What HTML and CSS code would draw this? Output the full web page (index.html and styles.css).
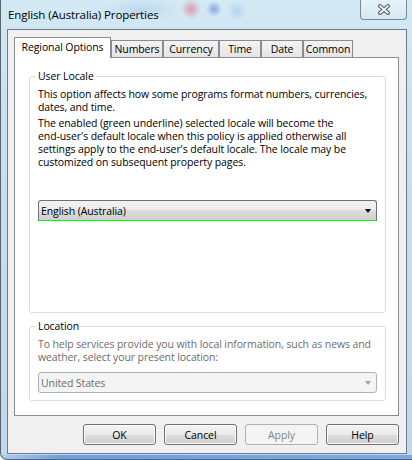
FILE: index.html
```html
<!DOCTYPE html>
<html lang="en">

<head>
  <title>English (Australia) Properties</title>
  <link rel="stylesheet" href="styles.css">
</head>

<body>
  <div class="window">
    <div class="titlebar">
      <span class="title">English (Australia) Properties</span>
      <button class="close-btn" aria-label="Close">
        <svg width="14" height="11" viewBox="0 0 14 11">
          <path d="M3 2 L11 9 M11 2 L3 9" stroke="#4b5661" stroke-width="3.8" stroke-linecap="round" />
          <path d="M3 2 L11 9 M11 2 L3 9" stroke="#ffffff" stroke-width="1.7" stroke-linecap="round" />
        </svg>
      </button>
    </div>

    <div class="client">
      <div class="tabs">
        <div class="tab selected tab-regional">Regional Options</div>
        <div class="tab tab-numbers">Numbers</div>
        <div class="tab tab-currency">Currency</div>
        <div class="tab tab-time">Time</div>
        <div class="tab tab-date">Date</div>
        <div class="tab tab-common">Common</div>
      </div>

      <div class="tab-panel">
        <fieldset class="group locale-group">
          <legend>User Locale</legend>
          <p>This option affects how some programs format numbers, currencies, dates, and time.</p>
          <p>The enabled (green underline) selected locale will become the <span class="nowrap">end-user's</span> default locale when this policy is applied otherwise all settings apply to the <span class="nowrap">end-user's</span> default locale. The locale may be customized on subsequent property pages.</p>
          <div class="combo locale-combo">
            <span>English (Australia)</span>
            <span class="arrow"></span>
          </div>
        </fieldset>

        <fieldset class="group location-group">
          <legend>Location</legend>
          <p>To help services provide you with local information, such as news and weather, select your present location:</p>
          <div class="combo location-combo">
            <span>United States</span>
            <span class="arrow"></span>
          </div>
        </fieldset>
      </div>

      <div class="buttons">
        <button class="btn">OK</button>
        <button class="btn">Cancel</button>
        <button class="btn" disabled>Apply</button>
        <button class="btn">Help</button>
      </div>
    </div>
  </div>
</body>

</html>
```

FILE: styles.css
```css
* {
  box-sizing: border-box;
}

body {
  margin: 0;
  font-family: 'Open Sans', 'Liberation Sans', sans-serif;
  font-size: 10.5px;
  letter-spacing: -0.1px;
  color: #000;
}

.nowrap {
  display: inline-block;
  white-space: nowrap;
}

/* Aero glass frame */
.window {
  width: 412px;
  height: 460px;
  overflow: hidden;
  border-left: 1px solid #58656f;
  border-bottom: 1px solid #58656f;
  border-bottom-left-radius: 7px;
  background:
    linear-gradient(to right, rgba(110, 160, 230, 0.2), #6c9ee4 60px, #7aa8e8) bottom / 100% 4px no-repeat,
    linear-gradient(#d3eaf5, #c8e0ef 120px, #c0d8ec);
}

.titlebar {
  display: flex;
  justify-content: space-between;
  align-items: flex-start;
  height: 29px;
  background:
    radial-gradient(circle at 190px 9px, rgba(225, 95, 110, 0.55), rgba(225, 95, 110, 0) 10px),
    radial-gradient(circle at 213px 9px, rgba(55, 80, 190, 0.45), rgba(55, 80, 190, 0) 8px),
    radial-gradient(circle at 236px 11px, rgba(120, 160, 225, 0.3), rgba(120, 160, 225, 0) 10px),
    radial-gradient(ellipse 40px 12px at 140px 10px, rgba(150, 185, 225, 0.35), rgba(150, 185, 225, 0));
}

.title {
  padding: 7px 0 0 7px;
  font-size: 11.5px;
  line-height: 16px;
}

.close-btn {
  display: flex;
  align-items: center;
  justify-content: center;
  width: 47px;
  height: 20px;
  margin-right: 5px;
  padding: 0;
  border: 1px solid #7b8997;
  border-top: none;
  border-radius: 0 0 4px 4px;
  background: linear-gradient(rgba(255, 255, 255, 0.45), rgba(215, 232, 242, 0.3));
}

.client {
  width: 400px;
  height: 425px;
  margin-left: 6px;
  padding: 7px 7px 0 6px;
  border: 1px solid #6f7b87;
  background-color: #f0f0f0;
}

.tabs {
  display: flex;
  align-items: flex-end;
  height: 20px;
}

.tab {
  height: 17px;
  line-height: 16px;
  text-align: center;
  border: 1px solid #898c95;
  border-bottom: none;
  background: linear-gradient(#f3f3f3, #e4e4e4);
  white-space: nowrap;
}

.tab.selected {
  position: relative;
  z-index: 1;
  height: 21px;
  margin-bottom: -1px;
  padding-top: 1px;
  background: #fff;
}

.tab-regional { width: 97px; }
.tab-numbers { width: 52px; }
.tab-currency { width: 56px; }
.tab-time { width: 42px; }
.tab-date { width: 42px; }
.tab-common { width: 50px; }

.tab-panel {
  height: 359px;
  padding: 11px 12px 0 14px;
  border: 1px solid #898c95;
  background-color: #fff;
}

.group {
  margin: 0;
  padding: 4px 8px 7px;
  border: 1px solid #d5dfe5;
  border-radius: 3px;
}

.group legend {
  margin-left: -2px;
  padding: 0 2px;
  line-height: 15px;
  color: #000;
}

.group p {
  margin: 0;
  line-height: 13px;
}

.group p + p {
  margin-top: 3px;
}

.locale-group {
  padding-bottom: 91px;
}

.location-group {
  margin-top: 6px;
  color: #6d6d6d;
}

.combo {
  display: flex;
  justify-content: space-between;
  align-items: center;
  height: 21px;
  padding: 0 5px 0 2px;
  border: 1px solid #707070;
  border-radius: 3px;
  background: linear-gradient(#f2f2f2, #ebebeb 50%, #dddddd 50%, #cfcfcf);
  color: #000;
}

.locale-combo {
  margin-top: 31px;
  border-bottom-color: #00ff00;
  border-radius: 3px 3px 0 0;
}

.location-combo {
  margin-top: 8px;
  border-color: #adb2b5;
  background: #f4f4f4;
  color: #6d6d6d;
}

.arrow {
  width: 0;
  height: 0;
  border-left: 3.5px solid transparent;
  border-right: 3.5px solid transparent;
  border-top: 4px solid #000;
}

.location-combo .arrow {
  border-top-color: #a3a3a3;
}

.buttons {
  display: flex;
  justify-content: flex-end;
  gap: 8px;
  margin-top: 8px;
}

.btn {
  width: 73px;
  height: 21px;
  padding: 0;
  font: inherit;
  letter-spacing: inherit;
  color: #000;
  border: 1px solid #707070;
  border-radius: 3px;
  background: linear-gradient(#f2f2f2, #ebebeb 50%, #dddddd 50%, #cfcfcf);
  box-shadow: inset 0 0 0 1px #fbfbfb;
}

.btn:disabled {
  color: #838383;
  border-color: #adb2b5;
  background: #f4f4f4;
  box-shadow: none;
}
```
